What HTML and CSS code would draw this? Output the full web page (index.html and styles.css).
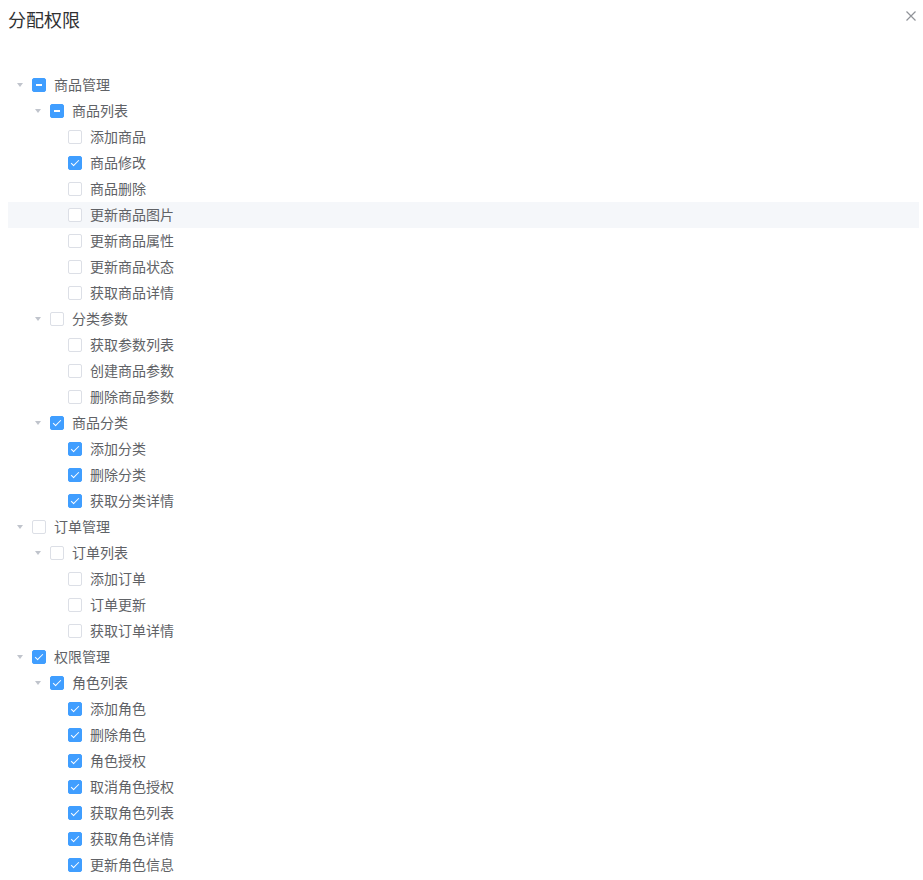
FILE: index.html
```html
<!DOCTYPE html>
<html lang="zh-CN">
<head>
<meta charset="utf-8">
<title>分配权限</title>
<link rel="stylesheet" href="styles.css">
</head>
<body>
<div class="dialog">
  <div class="header">
    <span class="title">分配权限</span>
    <button class="close" aria-label="关闭">
      <svg width="10" height="10" viewBox="0 0 10 10"><path d="M0.5 0.5 L9.5 9.5 M9.5 0.5 L0.5 9.5" stroke="#909399" stroke-width="1.2" fill="none"/></svg>
    </button>
  </div>
  <div class="tree">
    <div class="node l1"><span class="caret"></span><span class="cb ind"></span><span class="label">商品管理</span></div>
    <div class="node l2"><span class="caret"></span><span class="cb ind"></span><span class="label">商品列表</span></div>
    <div class="node l3"><span class="caret leaf"></span><span class="cb"></span><span class="label">添加商品</span></div>
    <div class="node l3"><span class="caret leaf"></span><span class="cb on"></span><span class="label">商品修改</span></div>
    <div class="node l3"><span class="caret leaf"></span><span class="cb"></span><span class="label">商品删除</span></div>
    <div class="node l3 hover"><span class="caret leaf"></span><span class="cb"></span><span class="label">更新商品图片</span></div>
    <div class="node l3"><span class="caret leaf"></span><span class="cb"></span><span class="label">更新商品属性</span></div>
    <div class="node l3"><span class="caret leaf"></span><span class="cb"></span><span class="label">更新商品状态</span></div>
    <div class="node l3"><span class="caret leaf"></span><span class="cb"></span><span class="label">获取商品详情</span></div>
    <div class="node l2"><span class="caret"></span><span class="cb"></span><span class="label">分类参数</span></div>
    <div class="node l3"><span class="caret leaf"></span><span class="cb"></span><span class="label">获取参数列表</span></div>
    <div class="node l3"><span class="caret leaf"></span><span class="cb"></span><span class="label">创建商品参数</span></div>
    <div class="node l3"><span class="caret leaf"></span><span class="cb"></span><span class="label">删除商品参数</span></div>
    <div class="node l2"><span class="caret"></span><span class="cb on"></span><span class="label">商品分类</span></div>
    <div class="node l3"><span class="caret leaf"></span><span class="cb on"></span><span class="label">添加分类</span></div>
    <div class="node l3"><span class="caret leaf"></span><span class="cb on"></span><span class="label">删除分类</span></div>
    <div class="node l3"><span class="caret leaf"></span><span class="cb on"></span><span class="label">获取分类详情</span></div>
    <div class="node l1"><span class="caret"></span><span class="cb"></span><span class="label">订单管理</span></div>
    <div class="node l2"><span class="caret"></span><span class="cb"></span><span class="label">订单列表</span></div>
    <div class="node l3"><span class="caret leaf"></span><span class="cb"></span><span class="label">添加订单</span></div>
    <div class="node l3"><span class="caret leaf"></span><span class="cb"></span><span class="label">订单更新</span></div>
    <div class="node l3"><span class="caret leaf"></span><span class="cb"></span><span class="label">获取订单详情</span></div>
    <div class="node l1"><span class="caret"></span><span class="cb on"></span><span class="label">权限管理</span></div>
    <div class="node l2"><span class="caret"></span><span class="cb on"></span><span class="label">角色列表</span></div>
    <div class="node l3"><span class="caret leaf"></span><span class="cb on"></span><span class="label">添加角色</span></div>
    <div class="node l3"><span class="caret leaf"></span><span class="cb on"></span><span class="label">删除角色</span></div>
    <div class="node l3"><span class="caret leaf"></span><span class="cb on"></span><span class="label">角色授权</span></div>
    <div class="node l3"><span class="caret leaf"></span><span class="cb on"></span><span class="label">取消角色授权</span></div>
    <div class="node l3"><span class="caret leaf"></span><span class="cb on"></span><span class="label">获取角色列表</span></div>
    <div class="node l3"><span class="caret leaf"></span><span class="cb on"></span><span class="label">获取角色详情</span></div>
    <div class="node l3"><span class="caret leaf"></span><span class="cb on"></span><span class="label">更新角色信息</span></div>
  </div>
</div>
</body>
</html>
```

FILE: styles.css
```css
html, body {
  margin: 0;
  padding: 0;
  background: #fff;
}
body {
  font-family: "Noto Sans CJK SC", "Noto Sans", "Liberation Sans", sans-serif;
  color: #606266;
}
.dialog {
  padding: 0 4px 0 8px;
}
.header {
  display: flex;
  justify-content: space-between;
  align-items: flex-start;
  padding-top: 7px;
  padding-right: 3px;
}
.title {
  font-size: 18px;
  line-height: 24px;
  padding-bottom: 1px;
  color: #303133;
}
.close {
  border: 0;
  background: none;
  padding: 0;
  margin-top: 4px;
  width: 10px;
  height: 10px;
  display: flex;
  cursor: pointer;
}
.tree {
  margin-top: 40px;
  font-size: 14px;
}
.node {
  display: flex;
  align-items: center;
  height: 26px;
}
.node.hover {
  background: #F5F7FA;
}
.l1 { padding-left: 0; }
.l2 { padding-left: 18px; }
.l3 { padding-left: 36px; }
.caret {
  width: 24px;
  height: 26px;
  display: flex;
  align-items: center;
  justify-content: center;
  flex: none;
}
.caret::before {
  content: "";
  width: 0;
  height: 0;
  border-left: 3.5px solid transparent;
  border-right: 3.5px solid transparent;
  border-top: 4px solid #C0C4CC;
}
.caret.leaf::before {
  border-top-color: transparent;
}
.cb {
  position: relative;
  width: 12px;
  height: 12px;
  border: 1px solid #DCDFE6;
  border-radius: 2px;
  background: #fff;
  margin-right: 8px;
  flex: none;
}
.cb.on, .cb.ind {
  background: #409EFF;
  border-color: #409EFF;
}
.cb.on::after {
  content: "";
  position: absolute;
  left: 4px;
  top: 1px;
  width: 3px;
  height: 7px;
  border: 1px solid #fff;
  border-left: 0;
  border-top: 0;
  transform: rotate(45deg);
  box-sizing: content-box;
}
.cb.ind::after {
  content: "";
  position: absolute;
  left: 3px;
  right: 3px;
  top: 5px;
  height: 2px;
  background: #fff;
}
.label {
  line-height: 24px;
  padding-bottom: 2px;
  white-space: nowrap;
}
```
